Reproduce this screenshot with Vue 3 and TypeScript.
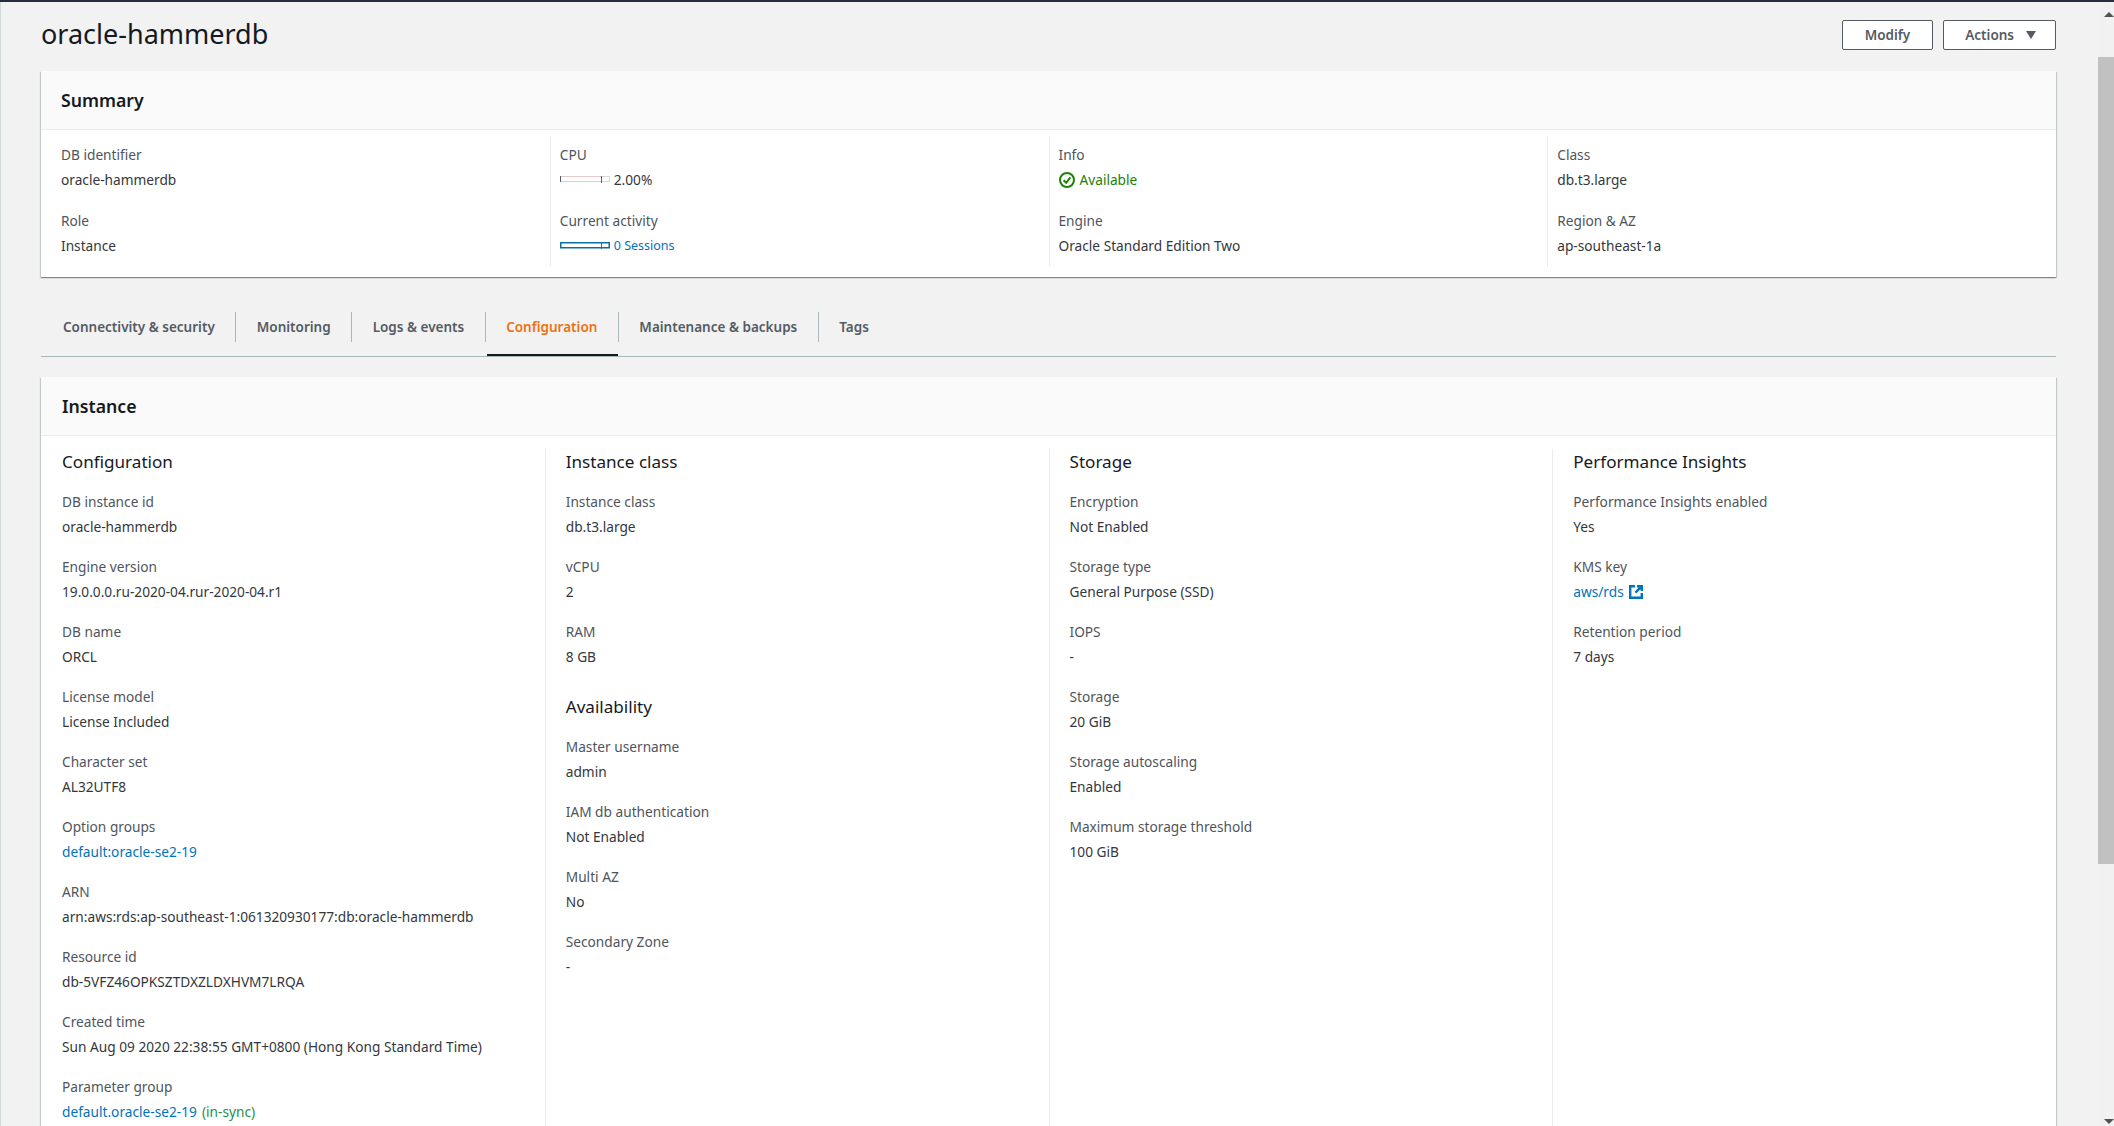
<template>
  <div class="console">
    <div class="top-strip"></div>
    <div class="frame">
      <main class="page">
        <header class="page-head">
          <h1>oracle-hammerdb</h1>
          <div class="head-actions">
            <button class="btn">Modify</button>
            <button class="btn btn-menu">
              Actions
              <svg class="caret" viewBox="0 0 10 8" width="10" height="8">
                <polygon points="0,0 10,0 5,8" fill="#545b64" />
              </svg>
            </button>
          </div>
        </header>

        <section class="card">
          <div class="card-head">Summary</div>
          <div class="summary-grid">
            <div class="summary-col">
              <div class="item">
                <div class="label">DB identifier</div>
                <div class="value">oracle-hammerdb</div>
              </div>
              <div class="item">
                <div class="label">Role</div>
                <div class="value">Instance</div>
              </div>
            </div>
            <div class="summary-col">
              <div class="item">
                <div class="label">CPU</div>
                <div class="value spark-row">
                  <svg class="spark" viewBox="0 0 50 7" width="50" height="7">
                    <rect x="0.5" y="0.5" width="49" height="5" fill="#fff" stroke="#d5dbdb" />
                    <line x1="1" y1="0.5" x2="41" y2="0.5" stroke="#e6c9c9" />
                    <line x1="1" y1="5.5" x2="41" y2="5.5" stroke="#e6c9c9" />
                    <line x1="0.5" y1="0" x2="0.5" y2="6" stroke="#545b64" />
                    <line x1="41.5" y1="0" x2="41.5" y2="7" stroke="#d13212" />
                  </svg>
                  2.00%
                </div>
              </div>
              <div class="item">
                <div class="label">Current activity</div>
                <div class="value spark-row">
                  <svg class="spark" viewBox="0 0 50 7" width="50" height="7">
                    <rect x="0.75" y="0.75" width="48.5" height="5" fill="#fff" stroke="#0f6e9c" stroke-width="1.5" />
                    <line x1="41.5" y1="0" x2="41.5" y2="7" stroke="#d13212" />
                  </svg>
                  <a class="link sessions">0 Sessions</a>
                </div>
              </div>
            </div>
            <div class="summary-col">
              <div class="item">
                <div class="label">Info</div>
                <div class="value status">
                  <svg viewBox="0 0 16 16" width="16" height="16">
                    <circle cx="8" cy="8" r="7" fill="none" stroke="#1d8102" stroke-width="2" />
                    <polyline points="4.6,8.2 7.2,10.8 11.4,5.4" fill="none" stroke="#1d8102" stroke-width="2" />
                  </svg>
                  Available
                </div>
              </div>
              <div class="item">
                <div class="label">Engine</div>
                <div class="value">Oracle Standard Edition Two</div>
              </div>
            </div>
            <div class="summary-col">
              <div class="item">
                <div class="label">Class</div>
                <div class="value">db.t3.large</div>
              </div>
              <div class="item">
                <div class="label">Region &amp; AZ</div>
                <div class="value">ap-southeast-1a</div>
              </div>
            </div>
          </div>
        </section>

        <nav class="tabs">
          <a
            v-for="tab in tabs"
            :key="tab"
            class="tab"
            :class="{ active: tab === activeTab }"
          >
            <span class="tab-text">{{ tab }}</span>
          </a>
        </nav>

        <section class="card instance-card">
          <div class="card-head">Instance</div>
          <div class="instance-grid">
            <div v-for="(col, i) in columns" :key="i" class="instance-col">
              <div v-for="group in col" :key="group.title" class="group">
                <h3>{{ group.title }}</h3>
                <div v-for="row in group.rows" :key="row.label" class="item">
                  <div class="label">{{ row.label }}</div>
                  <div class="value">
                    <a v-if="row.link" class="link">{{ row.value }}</a>
                    <template v-else>{{ row.value }}</template>
                    <span v-if="row.note" class="sync">{{ row.note }}</span>
                    <svg v-if="row.external" class="ext" viewBox="0 0 14 14" width="14" height="14">
                      <path d="M6 1.2H1.2v11.6h11.6V8" fill="none" stroke="#0073bb" stroke-width="2.4" />
                      <path d="M8 1.2h4.8V6M12.8 1.2 6.4 7.6" fill="none" stroke="#0073bb" stroke-width="2.4" />
                    </svg>
                  </div>
                </div>
              </div>
            </div>
          </div>
        </section>
      </main>

      <aside class="scrollbar">
        <span class="arrow up"></span>
        <div class="thumb"></div>
        <span class="arrow down"></span>
      </aside>
    </div>
  </div>
</template>

<script setup lang="ts">
  type Row = {
    label: string;
    value: string;
    link?: boolean;
    note?: string;
    external?: boolean;
  };

  type Group = {
    title: string;
    rows: Row[];
  };

  const tabs = [
    "Connectivity & security",
    "Monitoring",
    "Logs & events",
    "Configuration",
    "Maintenance & backups",
    "Tags",
  ];
  const activeTab = "Configuration";

  const columns: Group[][] = [
    [
      {
        title: "Configuration",
        rows: [
          { label: "DB instance id", value: "oracle-hammerdb" },
          { label: "Engine version", value: "19.0.0.0.ru-2020-04.rur-2020-04.r1" },
          { label: "DB name", value: "ORCL" },
          { label: "License model", value: "License Included" },
          { label: "Character set", value: "AL32UTF8" },
          { label: "Option groups", value: "default:oracle-se2-19", link: true },
          { label: "ARN", value: "arn:aws:rds:ap-southeast-1:061320930177:db:oracle-hammerdb" },
          { label: "Resource id", value: "db-5VFZ46OPKSZTDXZLDXHVM7LRQA" },
          { label: "Created time", value: "Sun Aug 09 2020 22:38:55 GMT+0800 (Hong Kong Standard Time)" },
          { label: "Parameter group", value: "default.oracle-se2-19", link: true, note: "(in-sync)" },
        ],
      },
    ],
    [
      {
        title: "Instance class",
        rows: [
          { label: "Instance class", value: "db.t3.large" },
          { label: "vCPU", value: "2" },
          { label: "RAM", value: "8 GB" },
        ],
      },
      {
        title: "Availability",
        rows: [
          { label: "Master username", value: "admin" },
          { label: "IAM db authentication", value: "Not Enabled" },
          { label: "Multi AZ", value: "No" },
          { label: "Secondary Zone", value: "-" },
        ],
      },
    ],
    [
      {
        title: "Storage",
        rows: [
          { label: "Encryption", value: "Not Enabled" },
          { label: "Storage type", value: "General Purpose (SSD)" },
          { label: "IOPS", value: "-" },
          { label: "Storage", value: "20 GiB" },
          { label: "Storage autoscaling", value: "Enabled" },
          { label: "Maximum storage threshold", value: "100 GiB" },
        ],
      },
    ],
    [
      {
        title: "Performance Insights",
        rows: [
          { label: "Performance Insights enabled", value: "Yes" },
          { label: "KMS key", value: "aws/rds", link: true, external: true },
          { label: "Retention period", value: "7 days" },
        ],
      },
    ],
  ];
</script>

<style>
  html,
  body {
    margin: 0;
    overflow: hidden;
  }
</style>

<style scoped>
  .console {
    display: flex;
    flex-direction: column;
    height: 100vh;
    overflow: hidden;
    background: #f2f2f2;
    color: #33373d;
    font-family: "Noto Sans", "Open Sans", sans-serif;
    font-size: 13.7px;
    line-height: 21px;
  }

  .top-strip {
    height: 2px;
    flex: none;
    background: #232f3e;
  }

  .frame {
    flex: 1;
    display: flex;
    min-height: 0;
  }

  .page {
    flex: 1;
    min-width: 0;
    padding: 0 42px 0 40px;
    border-left: 1px solid #d5dbdb;
  }

  .page-head {
    display: flex;
    justify-content: space-between;
    height: 68.5px;
    padding-top: 18px;
    box-sizing: border-box;
  }

  .page-head h1 {
    margin: 0;
    font-size: 27px;
    font-weight: 400;
    line-height: 28px;
    color: #16191f;
  }

  .head-actions {
    display: flex;
    gap: 10px;
    height: 30px;
  }

  .btn {
    display: flex;
    align-items: center;
    gap: 12px;
    height: 30px;
    padding: 0 21.5px;
    border: 1px solid #545b64;
    border-radius: 2px;
    background: #fff;
    color: #545b64;
    font: 600 13.5px "Noto Sans", sans-serif;
  }

  .btn-menu {
    padding: 0 19px 0 21.5px;
  }

  .card {
    background: #fff;
    box-shadow: 0 1px 1px 0 rgba(0, 28, 36, 0.3), 1px 1px 1px 0 rgba(0, 28, 36, 0.15),
      -1px 1px 1px 0 rgba(0, 28, 36, 0.15);
  }

  .card-head {
    height: 58px;
    padding: 0 20px;
    border-bottom: 1px solid #eaeded;
    background: #fafafa;
    color: #16191f;
    font-size: 17.7px;
    font-weight: 600;
    line-height: 58px;
  }

  .instance-card .card-head {
    padding-left: 21px;
  }

  .summary-grid {
    display: grid;
    grid-template-columns: repeat(4, 1fr);
    padding: 6px 10px 10px;
  }

  .summary-col {
    padding: 8.5px 10px 10.5px 9px;
    border-left: 1px solid #eaeded;
  }

  .summary-col:first-child {
    padding-left: 10px;
    border-left: none;
  }

  .summary-col .item {
    margin-bottom: 20px;
  }

  .summary-col .item:last-child {
    margin-bottom: 0;
  }

  .item {
    margin-bottom: 19px;
  }

  .label {
    margin-bottom: 4px;
    color: #4f555d;
  }

  .link {
    color: #0073bb;
  }

  .sessions {
    font-size: 12.5px;
  }

  .spark-row {
    display: flex;
    align-items: center;
    gap: 4px;
  }

  .status {
    display: flex;
    align-items: center;
    gap: 5px;
    color: #1d8102;
  }

  .tabs {
    display: flex;
    height: 44px;
    margin-top: 35px;
    border-bottom: 1px solid #aab7b8;
  }

  .tab {
    display: block;
    height: 30px;
    padding: 0 20.5px;
    border-left: 1px solid #aab7b8;
    color: #545b64;
    font-size: 13.5px;
    font-weight: 600;
    line-height: 30px;
    position: relative;
  }

  .tab:first-child {
    padding-left: 22px;
    border-left: none;
  }

  .tab.active {
    color: #ec7211;
  }

  .tab.active::after {
    content: "";
    position: absolute;
    left: 1px;
    right: 0;
    bottom: -14px;
    height: 2px;
    background: #16191f;
  }

  .instance-card {
    margin-top: 20px;
  }

  .instance-grid {
    display: grid;
    grid-template-columns: repeat(4, 1fr);
    padding-top: 13px;
    min-height: 800px;
  }

  .instance-col {
    padding: 0 20px;
    border-left: 1px solid #eaeded;
  }

  .instance-col:first-child {
    padding-left: 21px;
    border-left: none;
  }

  .group + .group {
    margin-top: 27px;
  }

  h3 {
    margin: 0 0 17px;
    color: #16191f;
    font-size: 17.1px;
    font-weight: 400;
    line-height: 25px;
  }

  .sync {
    margin-left: 5px;
    color: #1f8f4a;
  }

  .ext {
    margin-left: 5px;
    vertical-align: -2px;
  }

  .scrollbar {
    flex: none;
    width: 16px;
    position: relative;
    background: #f1f1f1;
  }

  .thumb {
    height: 807px;
    margin-top: 55px;
    background: #c1c1c1;
  }

  .arrow {
    position: absolute;
    right: 0;
    width: 0;
    height: 0;
    border-left: 5.5px solid transparent;
    border-right: 5.5px solid transparent;
  }

  .arrow.up {
    top: 10px;
    border-bottom: 5px solid #505050;
  }

  .arrow.down {
    bottom: 2px;
    border-top: 5px solid #505050;
  }
</style>
